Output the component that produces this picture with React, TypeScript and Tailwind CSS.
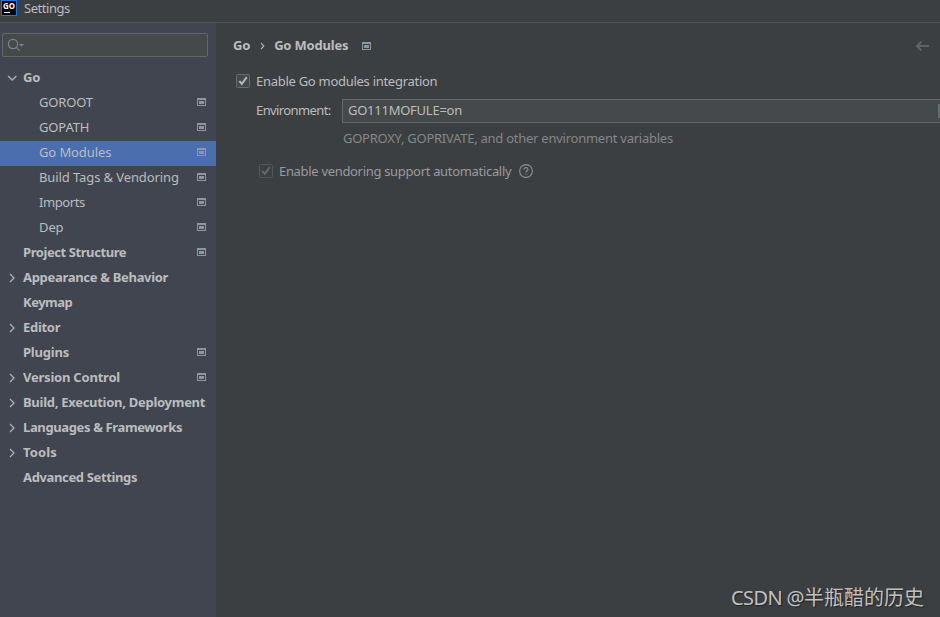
import clsx from "clsx";

interface TreeItem {
  label: string;
  child?: boolean;
  arrow?: "open" | "closed";
  project?: boolean;
  selected?: boolean;
  tracking: string;
}

const treeItems: TreeItem[] = [
  { label: "Go", arrow: "open", tracking: "tracking-[-0.1px]" },
  { label: "GOROOT", child: true, project: true, tracking: "tracking-[-0.15px]" },
  { label: "GOPATH", child: true, project: true, tracking: "tracking-[-0.15px]" },
  {
    label: "Go Modules",
    child: true,
    project: true,
    selected: true,
    tracking: "tracking-[-0.1px]",
  },
  {
    label: "Build Tags & Vendoring",
    child: true,
    project: true,
    tracking: "tracking-[-0.1px]",
  },
  { label: "Imports", child: true, project: true, tracking: "tracking-[-0.4px]" },
  { label: "Dep", child: true, project: true, tracking: "tracking-[-0.1px]" },
  { label: "Project Structure", project: true, tracking: "tracking-[-0.42px]" },
  { label: "Appearance & Behavior", arrow: "closed", tracking: "tracking-[-0.31px]" },
  { label: "Keymap", tracking: "tracking-[-0.5px]" },
  { label: "Editor", arrow: "closed", tracking: "tracking-[-0.3px]" },
  { label: "Plugins", project: true, tracking: "tracking-[-0.2px]" },
  {
    label: "Version Control",
    arrow: "closed",
    project: true,
    tracking: "tracking-[-0.22px]",
  },
  {
    label: "Build, Execution, Deployment",
    arrow: "closed",
    tracking: "tracking-[-0.28px]",
  },
  { label: "Languages & Frameworks", arrow: "closed", tracking: "tracking-[-0.37px]" },
  { label: "Tools", arrow: "closed", tracking: "tracking-[0.15px]" },
  { label: "Advanced Settings", tracking: "tracking-[-0.36px]" },
];

function ProjectIcon({ className }: { className?: string }) {
  return (
    <svg
      className={clsx("h-2 w-[9px] shrink-0", className)}
      viewBox="0 0 9 8"
      shapeRendering="crispEdges"
      fill="currentColor"
    >
      <path fillRule="evenodd" d="M0 0h9v8H0zM1 2v5h7V2z" />
      <path d="M2 3h5v3H2z" />
    </svg>
  );
}

function TreeArrow({ state }: { state: "open" | "closed" }) {
  return (
    <svg
      className="size-4"
      viewBox="0 0 16 16"
      fill="none"
      stroke="#adb0b3"
      strokeWidth="1.3"
    >
      <path d={state === "open" ? "M4 6l4.2 4L12.4 6" : "M6 4l4 4-4 4"} />
    </svg>
  );
}

function CheckBox({ disabled }: { disabled?: boolean }) {
  return (
    <svg
      className="size-3.5 shrink-0"
      viewBox="0 0 14 14"
      fill="none"
    >
      <rect
        x="0.5"
        y="0.5"
        width="13"
        height="13"
        rx="1"
        fill={disabled ? "#3c3f41" : "#43494a"}
        stroke={disabled ? "#545658" : "#6b6b6b"}
      />
      <path
        d="M3.3 7l2.5 2.9 5-6.8"
        stroke={disabled ? "#646668" : "#b4b6b8"}
        strokeWidth="2"
      />
    </svg>
  );
}

function TitleBar() {
  return (
    <header className="flex h-[23px] shrink-0 items-start border-b border-[#515355]">
      <svg className="ml-px size-4" viewBox="0 0 16 16">
        <rect width="16" height="16" fill="#087cfa" />
        <rect x="1" y="1" width="14" height="14" fill="#000" />
        <text
          x="2"
          y="8.5"
          fill="#fff"
          fontSize="8"
          fontWeight="700"
          textLength="12"
          lengthAdjust="spacingAndGlyphs"
        >
          GO
        </text>
        <path d="M3 12h6v1H3z" fill="#fff" />
      </svg>
      <span className="ml-[7px] leading-4 tracking-[-0.45px]">
        Settings
      </span>
    </header>
  );
}

function Sidebar() {
  return (
    <aside className="w-[216px] shrink-0 bg-[#41454f]">
      <div className="mt-2.5 ml-0.5 flex h-6 w-[206px] items-center rounded-[2px] border border-[#646668] bg-[#45494a] pl-1">
        <svg
          className="h-4 w-[18px]"
          viewBox="0 0 18 16"
          fill="none"
          stroke="#7a878f"
          strokeWidth="1.2"
        >
          <circle cx="6" cy="7" r="4.6" />
          <path d="M9.3 10.3l3.3 3.3" />
          <path d="M12 7h5l-2.5 2.7z" fill="#7a878f" stroke="none" />
        </svg>
      </div>

      <ul className="mt-[9px]">
        {treeItems.map((item) => (
          <li
            key={item.label}
            className={clsx(
              "flex h-[25px] items-center pr-2.5 pb-[3px]",
              item.selected && "bg-[#4b6eaf]",
            )}
          >
            <span className="flex w-[23px] shrink-0 pt-px pl-1">
              {item.arrow && <TreeArrow state={item.arrow} />}
            </span>
            <span
              className={clsx(
                "leading-5 whitespace-nowrap",
                item.child ? "pl-4" : "font-bold",
                item.tracking,
              )}
            >
              {item.label}
            </span>
            {item.project && (
              <ProjectIcon className="ml-auto text-[#8c98a1]" />
            )}
          </li>
        ))}
      </ul>
    </aside>
  );
}

function ModulesPanel() {
  return (
    <main className="min-w-0 flex-1">
      {/* Breadcrumbs */}
      <div className="mt-3 flex h-[22px] items-center pl-[17px] font-bold">
        <span className="tracking-[-0.2px]">Go</span>
        <svg
          className="mx-[9.5px] h-2 w-[5px]"
          viewBox="0 0 5 8"
          fill="none"
          stroke="#adb0b3"
          strokeWidth="1.2"
        >
          <path d="M1 0.8L3.8 4 1 7.2" />
        </svg>
        <span className="tracking-[-0.2px]">Go Modules</span>
        <ProjectIcon className="ml-3.5 text-[#8c98a1]" />
        <svg
          className="mr-[11px] ml-auto h-3 w-3.5"
          viewBox="0 0 14 12"
          fill="none"
          stroke="#606264"
          strokeWidth="2"
        >
          <path d="M2 6h12M6.3 1.5L2 6l4.3 4.5" />
        </svg>
      </div>

      <div className="mt-3.5 flex h-5 items-center gap-1.5 pl-5">
        <CheckBox />
        <span className="pt-0.5 tracking-[-0.28px]">
          Enable Go modules integration
        </span>
      </div>

      <div className="mt-2 flex h-6 items-center pl-10">
        <label className="w-[86px] tracking-[-0.6px]">Environment:</label>
        <div className="flex h-6 flex-1 items-center border-y border-l border-[#646668] bg-[#45494a] pl-[5px]">
          <span className="tracking-[-0.25px]">GO111MOFULE=on</span>
          <span className="ml-auto h-3.5 w-0.5 bg-[#646e73]" />
        </div>
      </div>
      <p className="mt-[5px] pl-[127px] leading-5 tracking-[-0.25px] text-[#85878a]">
        GOPROXY, GOPRIVATE, and other environment variables
      </p>

      <div className="mt-[13px] flex h-5 items-center pl-[43px] text-[#999b9d]">
        <CheckBox disabled />
        <span className="ml-1.5 pt-0.5 tracking-[-0.32px]">
          Enable vendoring support automatically
        </span>
        <svg
          className="ml-2 size-3.5"
          viewBox="0 0 14 14"
          fill="none"
          stroke="#8e9092"
          strokeWidth="1.1"
        >
          <circle cx="7" cy="7" r="6.4" />
          <path d="M5 5.6C5 4.3 5.8 3.6 7 3.6s2 .7 2 1.8c0 1.3-2 1.5-2 3" />
          <path d="M7 9.5v1.3" />
        </svg>
      </div>
    </main>
  );
}

export default function App() {
  return (
    <div className="relative flex h-[617px] w-[940px] flex-col overflow-hidden bg-[#3c3f41] font-['Noto_Sans','Noto_Sans_CJK_SC',sans-serif] text-[13px] text-[#bbbdbf]">
      <TitleBar />
      <div className="flex flex-1">
        <Sidebar />
        <ModulesPanel />
      </div>
      <div className="absolute right-4 bottom-1 text-[20px] leading-[30px] whitespace-nowrap text-[#c0c1c2] [text-shadow:1px_1px_1px_#222]">
        <span className="tracking-[-0.6px]">CSDN @</span>半瓶醋的历史
      </div>
    </div>
  );
}
